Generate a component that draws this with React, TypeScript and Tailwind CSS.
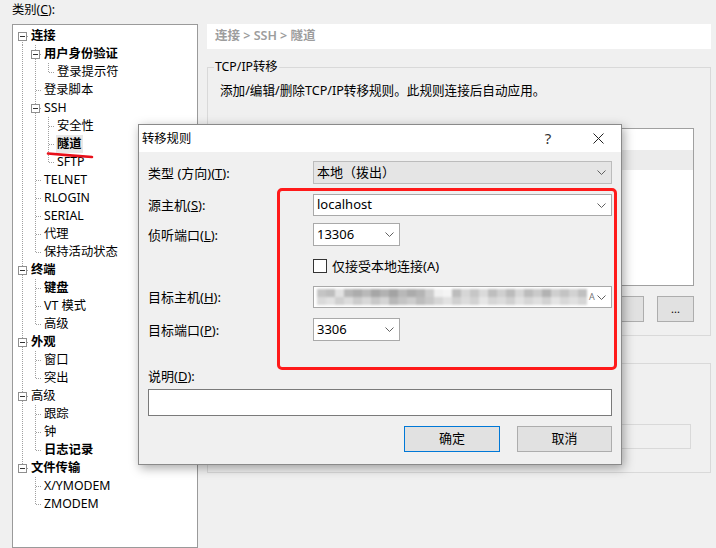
import React from 'react';

type Node = { label: string; bold?: boolean; selected?: boolean; children?: Node[] };

const tree: Node[] = [
  {
    label: '连接',
    bold: true,
    children: [
      { label: '用户身份验证', bold: true, children: [{ label: '登录提示符' }] },
      { label: '登录脚本' },
      {
        label: 'SSH',
        children: [{ label: '安全性' }, { label: '隧道', bold: true, selected: true }, { label: 'SFTP' }],
      },
      { label: 'TELNET' },
      { label: 'RLOGIN' },
      { label: 'SERIAL' },
      { label: '代理' },
      { label: '保持活动状态' },
    ],
  },
  {
    label: '终端',
    bold: true,
    children: [{ label: '键盘', bold: true }, { label: 'VT 模式' }, { label: '高级' }],
  },
  { label: '外观', bold: true, children: [{ label: '窗口' }, { label: '突出' }] },
  {
    label: '高级',
    children: [{ label: '跟踪' }, { label: '钟' }, { label: '日志记录', bold: true }],
  },
  { label: '文件传输', bold: true, children: [{ label: 'X/YMODEM' }, { label: 'ZMODEM' }] },
];

type Row = {
  label: string;
  bold?: boolean;
  selected?: boolean;
  hasChildren: boolean;
  guides: boolean[];
  isLast: boolean;
  isFirst: boolean;
};

const flatten = (nodes: Node[], level: number, guides: boolean[], out: Row[]) => {
  nodes.forEach((n, i) => {
    const isLast = i === nodes.length - 1;
    out.push({
      label: n.label,
      bold: n.bold,
      selected: n.selected,
      hasChildren: !!n.children,
      guides,
      isLast,
      isFirst: level === 0 && i === 0,
    });
    if (n.children) flatten(n.children, level + 1, [...guides, !isLast], out);
  });
  return out;
};

const rows = flatten(tree, 0, [], []);

const dot = { stroke: '#a0a0a0', strokeDasharray: '1 1' };

const Guide = ({ line }: { line: boolean }) => (
  <svg width="13" height="18" className="shrink-0">
    {line && <line x1="6.5" y1="0" x2="6.5" y2="18" {...dot} />}
  </svg>
);

const Connector = ({ row }: { row: Row }) => (
  <svg width="13" height="18" className="shrink-0">
    <line x1="6.5" y1={row.isFirst ? 9 : 0} x2="6.5" y2={row.isLast ? 10 : 18} {...dot} />
    <line x1="7" y1="9.5" x2="13" y2="9.5" {...dot} />
    {row.hasChildren && (
      <>
        <rect x="2.5" y="5.5" width="8" height="8" fill="#fff" stroke="#8f8f8f" />
        <line x1="4" y1="9.5" x2="9" y2="9.5" stroke="#333" />
      </>
    )}
  </svg>
);

const Chevron = () => (
  <svg width="9" height="5" className="ml-auto mr-[5px] shrink-0">
    <polyline points="0.5,0.5 4.5,4.5 8.5,0.5" fill="none" stroke="#606060" />
  </svg>
);

const Combo = ({ w, gray, children }: { w: string; gray?: boolean; children: React.ReactNode }) => (
  <div
    className={`${w} flex h-full items-center border pl-[3px] text-[13px] ${
      gray ? 'border-[#bcbcbc] bg-[#e5e5e5]' : 'border-[#a9a9a9] bg-white'
    }`}
  >
    {children}
    <Chevron />
  </div>
);

const blurTop = ['#c4c4c4', '#bdbdbd', '#e2e2e2', '#b6b6b6', '#acacac', '#b9b9b9', '#a6a6a6', '#b2b2b2', '#a3a3a3', '#b8b8b8', '#ababab', '#b4b4b4', '#cccccc', '#f0f0f0', '#f4f4f4', '#bcbcbc', '#d6d6d6', '#c6c6c6', '#dadada', '#bebebe', '#cfcfcf', '#bbbbbb', '#d6d6d6', '#bcbcbc', '#cacaca', '#b2b2b2', '#cfcfcf', '#c3c3c3', '#d2d2d2', '#c0c0c0'];
const blurBottom = ['#dadada', '#e2e2e2', '#d0d0d0', '#dcdcdc', '#cccccc', '#d8d8d8', '#c8c8c8', '#d4d4d4', '#b8b8b8', '#c4c4c4', '#cdcdcd', '#bdbdbd', '#c8c8c8', '#d6d6d6', '#e2e2e2', '#d0d0d0', '#dcdcdc', '#d2d2d2', '#e6e6e6', '#d6d6d6', '#dcdcdc', '#d0d0d0', '#e2e2e2', '#d6d6d6', '#dfdfdf', '#d2d2d2', '#e4e4e4', '#d8d8d8', '#e0e0e0', '#d6d6d6'];

const Label = ({ children }: { children: React.ReactNode }) => (
  <div className="w-[165px] shrink-0 text-[13px] leading-[18px]">{children}</div>
);

export default function App() {
  return (
    <div className="relative h-[548px] w-[716px] overflow-hidden bg-[#f0f0f0] font-['Noto_Sans','Noto_Sans_CJK_SC',sans-serif] text-[12.3px] text-black">
      <div className="flex pl-[12px]">
        {/* 类别树 */}
        <div className="w-[186px] shrink-0">
          <div className="h-[24px] leading-[20px]">
            类别(<u>C</u>):
          </div>
          <div className="h-[524px] border border-[#9a9a9a] bg-white pl-[3px] pt-[2px]">
            {rows.map((r, i) => (
              <div key={i} className="flex h-[18px] items-center">
                {r.guides.map((g, j) => (
                  <Guide key={j} line={g} />
                ))}
                <Connector row={r} />
                <span
                  className={`ml-[1px] px-[1px] leading-[18px] whitespace-nowrap ${r.bold ? 'font-bold' : ''} ${
                    r.selected ? 'bg-[#e8e8e8]' : ''
                  }`}
                >
                  {r.label}
                </span>
              </div>
            ))}
          </div>
        </div>

        {/* 右侧面板 */}
        <div className="ml-[9px] w-[504px] shrink-0 pt-[24px]">
          <div className="flex h-[25px] items-center bg-white pl-[8px] text-[12.5px] font-semibold text-[#9d9d9d]">
            连接 &gt; SSH &gt; 隧道
          </div>

          <div className="mt-[18px] h-[269px] border border-[#d9d9d9]">
            <div className="-mt-[10px] ml-[6px] w-fit bg-[#f0f0f0] px-[1px] leading-[18px]">TCP/IP转移</div>
            <div className="mt-[6px] pl-[12px] text-[12.6px] leading-[18px]">
              添加/编辑/删除TCP/IP转移规则。此规则连接后自动应用。
            </div>
            <div className="ml-[12px] mt-[28px] h-[158px] w-[474px] border border-[#a0a0a0] bg-white">
              <div className="h-[21px]" />
              <div className="h-[20px] bg-[#ececec]" />
            </div>
            <div className="mr-[16px] mt-[10px] flex h-[26px] justify-end gap-[13px]">
              <div className="w-[90px] border border-[#adadad] bg-[#e1e1e1]" />
              <div className="flex w-[37px] items-center justify-center border border-[#adadad] bg-[#e1e1e1] text-[11px]">
                ...
              </div>
            </div>
          </div>

          <div className="mt-[27px] h-[110px] border border-[#d9d9d9]">
            <div className="-mt-[10px] ml-[6px] w-fit bg-[#f0f0f0] px-[1px] leading-[18px]">X11转移</div>
            <div className="ml-auto mr-[19px] mt-[52px] h-[25px] w-[300px] border border-[#d9d9d9]" />
          </div>
        </div>
      </div>

      {/* 隧道 下的红线 */}
      <svg className="absolute left-[44px] top-[149px]" width="54" height="12">
        <path d="M4 4.5 Q26 6.5 48 8" fill="none" stroke="#e8101a" strokeWidth="2.6" strokeLinecap="round" />
      </svg>

      {/* 转移规则 对话框 */}
      <div className="absolute left-[138px] top-[124px] flex h-[341px] w-[484px] flex-col border border-[#8a8a8a] bg-[#f0f0f0] shadow-[2px_3px_10px_rgba(0,0,0,0.35)]">
        <div className="flex h-[27px] shrink-0 items-center bg-white pl-[3px]">
          <span className="leading-[18px]">转移规则</span>
          <div className="ml-auto flex h-full">
            <div className="flex w-[46px] items-center justify-center text-[15px] text-[#333]">?</div>
            <div className="ml-[4px] flex w-[46px] items-center justify-center">
              <svg width="11" height="11">
                <path d="M0.5 0.5 L10.5 10.5 M10.5 0.5 L0.5 10.5" stroke="#222" strokeWidth="1" />
              </svg>
            </div>
          </div>
        </div>

        <div className="flex flex-col pl-[9px]">
          <div className="mt-[9px] flex h-[23px] items-center">
            <Label>
              类型 (方向)(<u>T</u>):
            </Label>
            <Combo w="w-[299px]" gray>
              本地（拨出）
            </Combo>
          </div>
          <div className="mt-[10px] flex h-[22px] items-center">
            <Label>
              源主机(<u>S</u>):
            </Label>
            <Combo w="w-[299px]">localhost</Combo>
          </div>
          <div className="mt-[7px] flex h-[23px] items-center">
            <Label>
              侦听端口(<u>L</u>):
            </Label>
            <Combo w="w-[87px]">13306</Combo>
          </div>
          <div className="mt-[12px] flex h-[15px] items-center">
            <Label>{''}</Label>
            <div className="h-[14px] w-[14px] border border-[#333] bg-white" />
            <span className="ml-[5px] text-[13px] leading-[18px]">仅接受本地连接(A)</span>
          </div>
          <div className="mt-[13px] flex h-[22px] items-center">
            <Label>
              目标主机(<u>H</u>):
            </Label>
            <Combo w="w-[299px]">
              <div className="flex flex-col blur-[0.8px]">
                <div className="flex">
                  {blurTop.map((c, i) => (
                    <div key={i} className="h-[8px] w-[9px]" style={{ background: c }} />
                  ))}
                </div>
                <div className="flex">
                  {blurBottom.map((c, i) => (
                    <div key={i} className="h-[8px] w-[9px]" style={{ background: c }} />
                  ))}
                </div>
              </div>
              <span className="ml-[2px] text-[9px] text-[#777]">A</span>
            </Combo>
          </div>
          <div className="mt-[10px] flex h-[23px] items-center">
            <Label>
              目标端口(<u>P</u>):
            </Label>
            <Combo w="w-[87px]">3306</Combo>
          </div>
          <div className="mt-[27px] h-[16px] text-[13px] leading-[16px]">
            说明(<u>D</u>):
          </div>
          <div className="mt-[5px] h-[27px] w-[464px] border border-[#7a7a7a] bg-white" />
          <div className="mt-[10px] flex h-[26px] w-[464px] justify-end gap-[17px]">
            <div className="flex w-[96px] items-center justify-center border border-[#0078d7] bg-[#e1e1e1] text-[13px]">
              确定
            </div>
            <div className="flex w-[95px] items-center justify-center border border-[#adadad] bg-[#e1e1e1] text-[13px]">
              取消
            </div>
          </div>
        </div>
      </div>

      {/* 红色标注框 */}
      <div className="absolute left-[277px] top-[188px] h-[182px] w-[340px] rounded-[5px] border-[3px] border-[#ff1a1a]" />
    </div>
  );
}
